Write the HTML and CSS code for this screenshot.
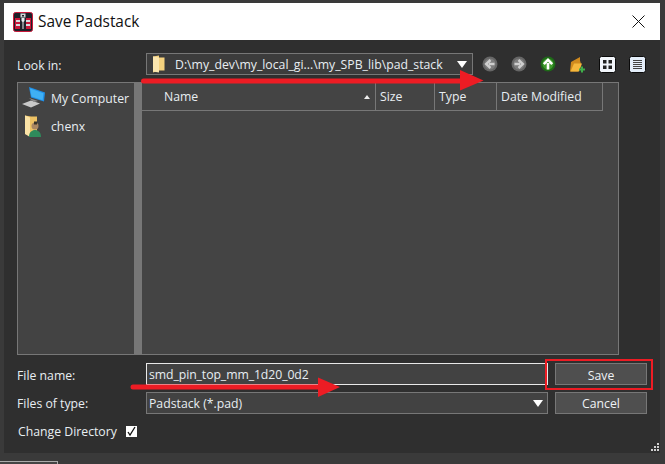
FILE: index.html
```html
<!DOCTYPE html>
<html lang="en">
<head>
<meta charset="utf-8">
<title>Save Padstack</title>
<link rel="stylesheet" href="styles.css">
</head>
<body>
<div class="dialog">
  <header class="titlebar">
    <svg class="app-icon" width="20" height="20" viewBox="0 0 20 20">
      <rect x="0.5" y="0.5" width="19" height="19" rx="2" fill="#1d2028" stroke="#c8183a"/>
      <path d="M2 6h5v11H2zM13 6h5v11h-5z" fill="#c8183a"/>
      <path d="M3 8h4v2H3zM3 12h4v2H3zM13 8h4v2h-4zM13 12h4v2h-4z" fill="#d6dde0"/>
      <path d="M7.500 1.500h5v4h-5z" fill="#cfd4d6"/><path d="M9 3h2v1.500H9z" fill="#1d2028"/>
      <path d="M8.500 6h3v3l-1 1v7h-1v-7l-1-1z" fill="#e8ecee"/>
    </svg>
    <span class="title">Save Padstack</span>
    <svg class="close" width="13" height="13" viewBox="0 0 13 13"><path d="M.5.5l12 12M12.500.5l-12 12" stroke="#111" stroke-width="1" fill="none"/></svg>
  </header>

  <main class="body">
    <div class="row look-row">
      <label class="label">Look in:</label>
      <div class="combo path-combo">
        <svg class="folder" width="14" height="18" viewBox="0 0 14 18"><path d="M1 1.500l6-1v2h5.500v13H7l-6 2z" fill="#f5d27e"/><path d="M1 1.500l6 1v15l-6-1z" fill="#fbe6ae"/></svg>
        <span class="path-text">D:\my_dev\my_local_gi...\my_SPB_lib\pad_stack</span>
        <span class="caret"></span>
      </div>
      <div class="toolbar">
        <svg class="tool" width="16" height="16" viewBox="0 0 16 16"><circle cx="8" cy="8" r="7.500" fill="#666"/><circle cx="8" cy="8" r="5.500" fill="#7d7d7d"/><path d="M12.500 8H7M8.500 4L4.200 8l4.300 4" stroke="#cfcfcf" stroke-width="2.400" fill="none"/></svg>
        <svg class="tool" width="16" height="16" viewBox="0 0 16 16"><circle cx="8" cy="8" r="7.500" fill="#666"/><circle cx="8" cy="8" r="5.500" fill="#7d7d7d"/><path d="M3.500 8H9M7.500 4l4.300 4-4.300 4" stroke="#cfcfcf" stroke-width="2.400" fill="none"/></svg>
        <svg class="tool" width="16" height="16" viewBox="0 0 16 16"><circle cx="8" cy="8" r="7.500" fill="#1e6b18"/><circle cx="8" cy="8" r="5.500" fill="#3f9a2c"/><path d="M8 13.500V7M3.800 8.200L8 3.800l4.200 4.400" stroke="#fff" stroke-width="2.600" fill="none"/></svg>
        <svg class="tool" width="17" height="17" viewBox="0 0 17 17"><path d="M1 15.500L2 6l9-5v3.500l1 3.500-3 7.500z" fill="#d08a1e"/><path d="M1.500 15.500L5 7.500h8l-3 8z" fill="#f6b73c"/><path d="M13 10.500v6M10 13.500h6" stroke="#3fae4a" stroke-width="2"/></svg>
        <svg class="tool" width="17" height="17" viewBox="0 0 17 17"><rect x=".5" y=".5" width="16" height="16" rx="2" fill="#f2f6fb" stroke="#0a0a0a"/><path d="M4 4h3.500v3.500H4zM9.500 4H13v3.500H9.500zM4 9.500h3.500V13H4zM9.500 9.500H13V13H9.500z" fill="#222"/></svg>
        <svg class="tool" width="17" height="17" viewBox="0 0 17 17"><rect x=".5" y=".5" width="16" height="16" rx="2" fill="#e4eefa" stroke="#0a0a0a"/><path d="M4 4.500h9M4 6.500h9M4 8.500h9M4 10.500h9M4 12.500h9" stroke="#444"/></svg>
      </div>
    </div>

    <div class="browser">
      <aside class="places">
        <div class="place">
          <svg class="place-icon" width="28" height="22" viewBox="0 0 28 22"><path d="M8 0l16 5.500-1 9L10 10.500z" fill="#1f8fe8"/><path d="M9 1.500l13.500 4.800-.8 7L10.500 9.500z" fill="#3fb0f5"/><path d="M1 17l9-3.500 9 3-9 4z" fill="#c9c9c9"/><path d="M8 11l9 3-4 1z" fill="#8d8d8d"/></svg>
          <span>My Computer</span>
        </div>
        <div class="place">
          <svg class="place-icon" width="28" height="23" viewBox="0 0 28 23"><path d="M4 .5l6 1h6V20H9l-5-1z" fill="#eec264"/><path d="M4 .5l5 2V22l-5-3z" fill="#fbe3a6"/><circle cx="14" cy="11" r="3.500" fill="#a98662"/><path d="M13 6.500h3v3h-3z" fill="#3a3328"/><path d="M8 22c0-5 3-7 6-7s6 2 6 7z" fill="#2f8a5b"/></svg>
          <span>chenx</span>
        </div>
      </aside>
      <div class="splitter"></div>
      <section class="files">
        <div class="file-head">
          <div class="col col-name"><span>Name</span><span class="sort"></span></div>
          <div class="col col-size">Size</div>
          <div class="col col-type">Type</div>
          <div class="col col-date">Date Modified</div>
        </div>
      </section>
    </div>

    <div class="row form-row first">
      <label class="label">File name:</label>
      <div class="input">smd_pin_top_mm_1d20_0d2</div>
      <button class="btn save-btn" type="button">Save</button>
    </div>
    <div class="row form-row">
      <label class="label type-label">Files of type:</label>
      <div class="combo type-combo"><span>Padstack (*.pad)</span><span class="caret"></span></div>
      <button class="btn" type="button">Cancel</button>
    </div>
    <div class="row check-row">
      <span class="check-label">Change Directory</span>
      <span class="checkbox"><svg width="11" height="11" viewBox="0 0 11 11"><path d="M2 6l2 3 5-8" stroke="#111" stroke-width="1.300" fill="none"/></svg></span>
    </div>
    <svg class="grip" width="9" height="9" viewBox="0 0 9 9"><path d="M6 0h2v2H6zM3 3h2v2H3zM6 3h2v2H6zM0 6h2v2H0zM3 6h2v2H3zM6 6h2v2H6z" fill="#d0d0d0"/></svg>
  </main>

  <svg class="markup" width="665" height="464" viewBox="0 0 665 464">
    <path d="M143.500 81H465" stroke="#ed1c24" stroke-width="5" stroke-linecap="round"/>
    <path d="M460 70l23.500 10.500L460 90.500z" fill="#ed1c24"/>
    <path d="M133 387H325" stroke="#ed1c24" stroke-width="5" stroke-linecap="round"/>
    <path d="M318 377.500l22 9.500-22 10z" fill="#ed1c24"/>
    <rect x="546" y="360" width="106" height="29" fill="none" stroke="#ed1c24" stroke-width="2"/>
  </svg>
</div>
<div class="taskbar-edge"></div>
</body>
</html>
```

FILE: styles.css
```css
* { box-sizing: border-box; }
html, body { margin: 0; padding: 0; }
body {
  width: 665px;
  height: 464px;
  overflow: hidden;
  background: #3a3a3a;
  font-family: "Open Sans", "Noto Sans", sans-serif;
  font-size: 12.25px;
  color: #e8eef2;
  position: relative;
}
.dialog {
  padding: 3px 5px 0 4px;
  height: 453px;
}
.titlebar {
  height: 37px;
  background: #fff;
  color: #111;
  display: flex;
  align-items: center;
  padding: 0 0 0 9px;
}
.app-icon { flex: none; }
.title { font-size: 15.400px; margin-left: 5px; flex: 1; }
.close { margin-right: 15px; }
.body {
  background: #2f2f2f;
  height: 413px;
  padding: 13px 13px 0 13px;
  position: relative;
}
.row { display: flex; align-items: center; }
.label { width: 129px; flex: none; padding-top: 2px; }
.type-label { padding-top: 0; }
.look-row { height: 22px; }
.combo, .input {
  height: 22px;
  display: flex;
  align-items: center;
  background: #424242;
  border: 1px solid #777;
}
.path-combo { width: 327px; padding: 0 5px 0 5px; background: #3c3c3c; }
.folder { flex: none; }
.path-text { margin-left: 9px; flex: 1; white-space: nowrap; padding-top: 1px; }
.caret {
  width: 0; height: 0;
  border-left: 5.500px solid transparent;
  border-right: 5.500px solid transparent;
  border-top: 7px solid #fff;
  flex: none;
}
.toolbar { display: flex; align-items: center; margin-left: 9px; gap: 13px; }
.tool { flex: none; }
.browser {
  display: flex;
  height: 273px;
  margin-top: 7px;
  width: 602px;
}
.places {
  width: 117px;
  border: 1px solid #777;
  border-right: 0;
  background: #434343;
  padding: 1px 0 0 3px;
  flex: none;
}
.place { display: flex; align-items: center; gap: 2px; height: 28px; white-space: nowrap; }
.place-icon { flex: none; }
.splitter { width: 8px; background: #777; flex: none; }
.files {
  flex: 1;
  border: 1px solid #777;
  border-left: 0;
  background: #444;
}
.file-head {
  display: flex;
  height: 28px;
  width: 461px;
  border-bottom: 1px solid #777;
  border-right: 1px solid #777;
}
.col {
  display: flex;
  align-items: center;
  border-right: 1px solid #777;
  padding-left: 4px;
}
.col:last-child { border-right: 0; }
.col-name { width: 234px; padding-left: 22px; justify-content: space-between; padding-right: 5px; }
.col-size { width: 59px; }
.col-type { width: 62px; }
.col-date { width: 105px; }
.sort {
  width: 0; height: 0;
  border-left: 3.500px solid transparent;
  border-right: 3.500px solid transparent;
  border-bottom: 4px solid #eee;
}
.form-row { height: 22px; }
.form-row.first { margin-top: 8px; margin-bottom: 7px; }
.input {
  width: 402px;
  padding: 0 0 0 2px;
  letter-spacing: -0.080px;
  border: 1px solid #e8e8e8;
  flex: none;
}
.type-combo {
  width: 402px;
  padding: 0 4px 0 2px;
  justify-content: space-between;
  flex: none;
}
.btn {
  width: 92px;
  height: 22px;
  margin-left: 7px;
  background: #4f4f4f;
  border: 1px solid #777;
  color: #eef2f5;
  font: inherit;
  padding: 0;
}
.save-btn { padding-top: 2px; }
.check-row { margin-top: 7px; height: 20px; padding-left: 1px; }
.checkbox {
  width: 11px; height: 11px;
  background: #fff;
  margin-left: 9px;
  display: flex;
}
.grip {
  position: absolute;
  right: 0;
  bottom: 1px;
}
.markup { position: absolute; left: 0; top: 0; pointer-events: none; }
.taskbar-edge {
  position: absolute;
  left: 0;
  top: 461px;
  width: 58px;
  height: 3px;
  border-top: 1px solid #aaa;
  border-right: 1px solid #aaa;
  background: #444;
}
```
